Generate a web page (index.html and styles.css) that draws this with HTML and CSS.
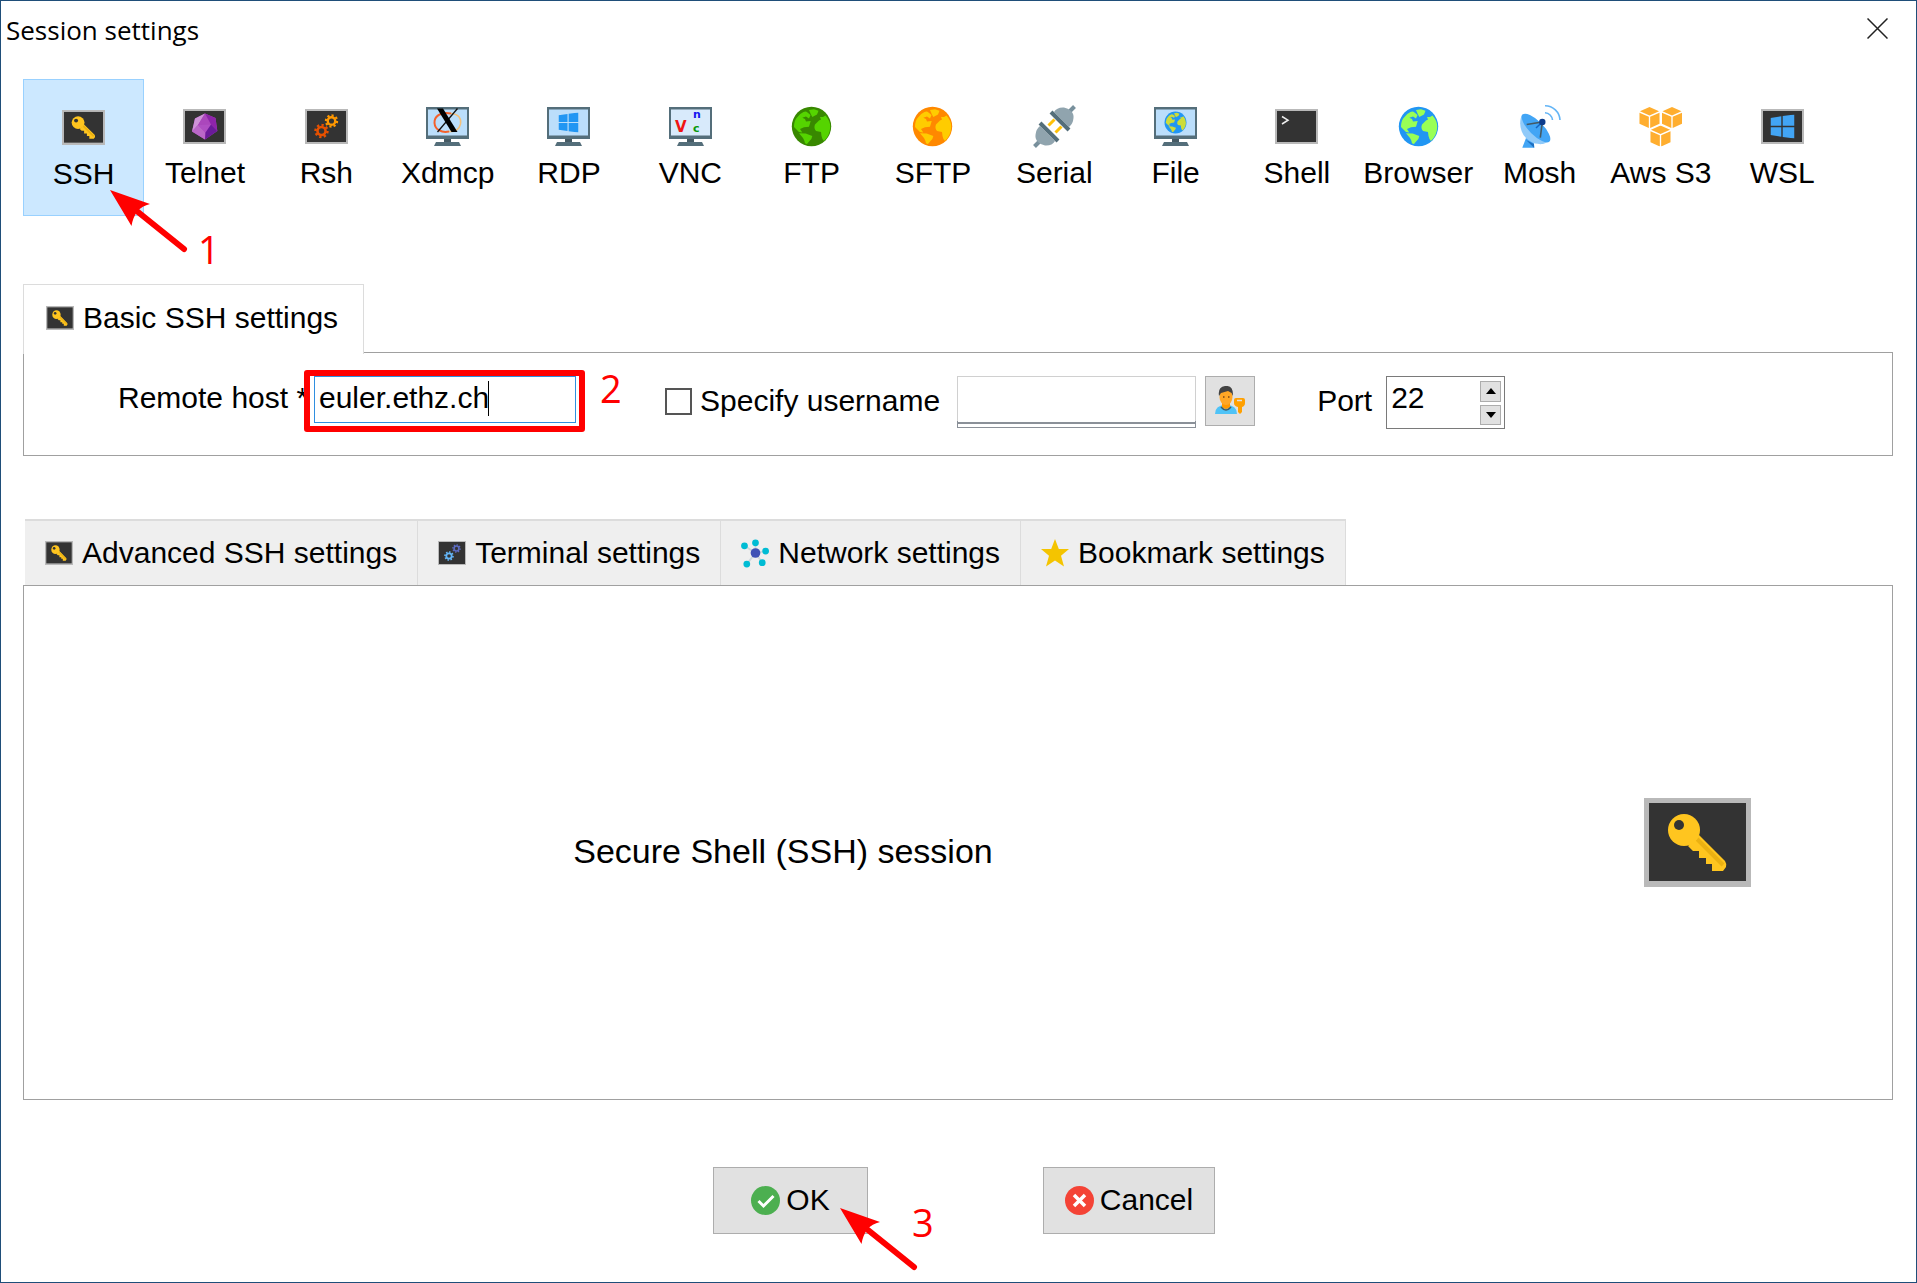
FILE: index.html
```html
<!DOCTYPE html>
<html lang="en">
<head>
  <meta charset="UTF-8">
  <meta name="viewport" content="width=device-width, initial-scale=1.0">
  <title>Session settings</title>
  <link rel="stylesheet" href="styles.css">
</head>
<body>
  <!-- Shared icon shapes -->
  <svg class="sprite" aria-hidden="true">
    <symbol id="key" viewBox="0 0 107 89" preserveAspectRatio="none">
      <rect width="107" height="89" fill="#b9b9b9"/>
      <rect x="5" y="5" width="97" height="78" fill="#333"/>
      <path d="M55 37L81 63Q83 66 82 69L79 73H68V66H62V60H55V53H49L44 48Z" fill="#ffc51f"/>
      <path d="M53 41L79 67" stroke="#ebb112" stroke-width="4"/>
      <circle cx="40" cy="32" r="16" fill="#ffc51f"/>
      <circle cx="35" cy="27" r="5" fill="#333"/>
    </symbol>
    <symbol id="screen" viewBox="0 0 43 43">
      <rect y="4" width="43" height="35" fill="#b9b9b9"/>
      <rect x="2" y="6" width="39" height="31" fill="#333"/>
    </symbol>
    <symbol id="monitor" viewBox="0 0 43 43">
      <path d="M0 2H43V34H0Z" fill="#546e7a"/>
      <path d="M2 4.500H41V30.500H2Z" fill="var(--glass, #bbdefb)"/>
      <path d="M18 34H25V38H18Z" fill="#455a64"/>
      <path d="M10 37H33L35 41H8Z" fill="#546e7a"/>
    </symbol>
    <symbol id="gear" viewBox="0 0 16 16">
      <circle cx="8" cy="8" r="4.300" fill="none" stroke="currentColor" stroke-width="2.800"/>
      <circle cx="8" cy="8" r="6.400" fill="none" stroke="currentColor" stroke-width="2.600" pathLength="16" stroke-dasharray="1"/>
    </symbol>
    <symbol id="win" viewBox="0 0 24 24">
      <path d="M0 3.400L10.800 1.800V11.300H0ZM12.200 1.600L24 0V11.300H12.200ZM0 12.700H10.800V22.200L0 20.600ZM12.200 12.700H24V24L12.200 22.400Z" fill="currentColor"/>
    </symbol>
    <symbol id="globe" viewBox="0 0 43 43">
      <circle cx="21.500" cy="21.500" r="19.700" fill="var(--sea)"/>
      <g fill="var(--land)">
        <path d="M4 22Q4 15 7.500 12Q10 8.500 13.500 7Q16 6 17.500 7.500L20.500 10L19 13.500L16 11.500L12.300 12.700L15 14L16 16.500L20.700 16L19 21.700L14 22.300L10 24L12.300 27.500L9 27Z"/>
        <path d="M9 28.300L15.700 28.500L22.300 31Q22 34 19.500 36L17 39Q14.500 39 14.500 36L13 33Z"/>
        <path d="M35.500 10.500Q40.500 16 40.200 22Q40 30 34 36Q32 34 31.500 31L31 27L26 26Q23.500 23 25 19.500L29 15.500L31 14.500L30 12L33 12Z"/>
        <path d="M19 5L24 4.200L28.500 5.700L27 9.500L22.300 12L20.500 8.500Z"/>
      </g>
    </symbol>
    <symbol id="plug" viewBox="0 0 43 43">
      <path d="M8 35L1.500 41.500" stroke="#78909c" stroke-width="4"/>
      <path d="M7 21L22 36Q19 41 12 40.500Q8 40 5 37Q2 34 2.500 30Q3 24 7 21Z" fill="#90a4ae"/>
      <path d="M7 18L25 36" stroke="#546e7a" stroke-width="4"/>
    </symbol>
    <symbol id="cube" viewBox="0 0 22 22">
      <path d="M11 0L21 4.500L11 9L1 4.500ZM.5 6L10.300 10.300V22L.5 17.500ZM21.500 6L11.700 10.300V22L21.500 17.500Z" fill="#ffae2f"/>
    </symbol>
    <symbol id="arrow" viewBox="0 0 80 66">
      <path d="M28 22L74 59" stroke="#f00" stroke-width="6" stroke-linecap="round"/>
      <path d="M0 0L40 14Q32 16 27.500 21Q23 27 21.500 36Z" fill="#f00"/>
    </symbol>
  </svg>

  <div class="window">
    <header class="titlebar">
      <h1 class="title">Session settings</h1>
      <button type="button" class="close" aria-label="Close">
        <svg width="21" height="21" viewBox="0 0 21 21"><path d="M.5 .5L20.500 20.500M20.500 .5L.5 20.500" stroke="#222" stroke-width="1.500"/></svg>
      </button>
    </header>

    <nav class="sessions">
      <button type="button" class="session selected">
        <svg class="icon" viewBox="0 0 43 43"><use href="#key" y="4" width="43" height="35"/></svg>
        <span>SSH</span>
        <span class="callout callout-ssh"><svg width="80" height="66"><use href="#arrow"/></svg><b class="step">1</b></span>
      </button>
      <button type="button" class="session">
        <svg class="icon" viewBox="0 0 43 43">
          <use href="#screen"/>
          <path d="M22 8.500L32.500 13L34.300 26L22 34.500L9 26.500L12 13.500Z" fill="#ab47bc"/>
          <path d="M22 8.500L12 13.500L9 26.500L15 20Z" fill="#ce93d8"/>
          <path d="M22 8.500L15 20L28 19.500Z" fill="#ab47bc"/>
          <path d="M22 8.500L32.500 13L34.300 26L28 19.500Z" fill="#8e24aa"/>
          <path d="M9 26.500L15 20L22.500 27.500L22 34.500Z" fill="#ba68c8"/>
          <path d="M15 20L28 19.500L22.500 28Z" fill="#b04fc3"/>
          <path d="M28 19.500L34.300 26L22 34.500L22.500 27.500Z" fill="#6a1b9a"/>
        </svg>
        <span>Telnet</span>
      </button>
      <button type="button" class="session">
        <svg class="icon" viewBox="0 0 43 43">
          <use href="#screen"/>
          <use href="#gear" x="19.500" y="9" width="14" height="14" color="#ff9800"/>
          <use href="#gear" x="9" y="18.500" width="15" height="15" color="#e65100"/>
        </svg>
        <span>Rsh</span>
      </button>
      <button type="button" class="session">
        <svg class="icon" viewBox="0 0 43 43">
          <use href="#monitor"/>
          <path d="M25 8.500C14 6 8 12 8.500 18C9 25 16 28 23 26.500" fill="none" stroke="#f4612c" stroke-width="2"/>
          <path d="M25 8.500C33 9 35.500 14 34.500 19C33 25 28 27 23 26.500" fill="none" stroke="#f5c07a" stroke-width="1.500"/>
          <path d="M31.500 3.500L11.500 27" stroke="#111" stroke-width="1.300"/>
          <path d="M11 3.500H17L31.500 27H25.500Z" fill="#000"/>
        </svg>
        <span>Xdmcp</span>
      </button>
      <button type="button" class="session">
        <svg class="icon" viewBox="0 0 43 43"><use href="#monitor"/><use href="#win" x="11.500" y="7.500" width="20" height="20" color="#2196f3"/></svg>
        <span>RDP</span>
      </button>
      <button type="button" class="session">
        <svg class="icon vnc" viewBox="0 0 43 43">
          <use href="#monitor"/>
          <text class="vnc-v" x="6" y="27" fill="#f01414">V</text>
          <text x="24" y="13" fill="#1414f0">n</text>
          <text x="24" y="27" fill="#0a9a0a">c</text>
        </svg>
        <span>VNC</span>
      </button>
      <button type="button" class="session">
        <svg class="icon globe-green" viewBox="0 0 43 43"><use href="#globe"/></svg>
        <span>FTP</span>
      </button>
      <button type="button" class="session">
        <svg class="icon globe-orange" viewBox="0 0 43 43"><use href="#globe"/></svg>
        <span>SFTP</span>
      </button>
      <button type="button" class="session">
        <svg class="icon" viewBox="0 0 43 43">
          <path d="M15.500 20.500L21.500 14.500M22.500 27.500L28.500 21.500" stroke="#ffc107" stroke-width="3"/>
          <use href="#plug"/>
          <use href="#plug" transform="rotate(180 21.500 21.500)"/>
        </svg>
        <span>Serial</span>
      </button>
      <button type="button" class="session">
        <svg class="icon globe-file" viewBox="0 0 43 43"><use href="#monitor"/><use href="#globe" x="9.500" y="5.500" width="24" height="24"/></svg>
        <span>File</span>
      </button>
      <button type="button" class="session">
        <svg class="icon" viewBox="0 0 43 43"><use href="#screen"/><path d="M7 11.500L13 15.200L7 19" fill="none" stroke="#eee" stroke-width="1.500"/></svg>
        <span>Shell</span>
      </button>
      <button type="button" class="session">
        <svg class="icon globe-blue" viewBox="0 0 43 43"><use href="#globe"/></svg>
        <span>Browser</span>
      </button>
      <button type="button" class="session">
        <svg class="icon" viewBox="0 0 43 43">
          <path d="M8 33L4.300 42.700H16.500L15.500 36Z" fill="#42a5f5"/>
          <path d="M8 35L16 39V42.700Z" fill="#1e6fc0"/>
          <path d="M4.300 9.300C-2 21 6 41 25 39L31.500 36.500Z" fill="#90caf9"/>
          <ellipse cx="18" cy="23" rx="19" ry="7" transform="rotate(45 18 23)" fill="#42a5f5"/>
          <path d="M8.700 19.500L24.300 17L22.300 32.700" fill="none" stroke="#455a64" stroke-width="1.600"/>
          <path d="M24.300 17L18 23" stroke="#1565c0" stroke-width="1.500"/>
          <circle cx="24.300" cy="17" r="3.200" fill="#0d3c8c"/>
          <path d="M27 7.700A8 8 0 0 1 34.500 15M27 .8A15 15 0 0 1 42 15" fill="none" stroke="#64b5f6" stroke-width="1.600"/>
        </svg>
        <span>Mosh</span>
      </button>
      <button type="button" class="session">
        <svg class="icon" viewBox="0 0 43 43">
          <use href="#cube" x="0" y="2" width="21" height="21"/>
          <use href="#cube" x="22.500" y="2" width="21" height="21"/>
          <use href="#cube" x="11" y="20.500" width="21" height="21"/>
        </svg>
        <span>Aws S3</span>
      </button>
      <button type="button" class="session">
        <svg class="icon" viewBox="0 0 43 43"><use href="#screen"/><use href="#win" x="9.500" y="9.500" width="24" height="24" color="#42a5f5"/></svg>
        <span>WSL</span>
      </button>
    </nav>

    <section class="basic">
      <div class="tabs">
        <button type="button" class="tab active">
          <svg width="28" height="24"><use href="#key"/></svg>
          Basic SSH settings
        </button>
      </div>
      <form class="panel form-row">
        <label class="host-label" for="host">Remote host *</label>
        <div class="host-field">
          <input type="text" id="host" class="host-input" value="euler.ethz.ch">
          <span class="caret"></span>
          <span class="highlight"></span>
          <b class="step step-host">2</b>
        </div>
        <label class="check" for="specify">
          <input type="checkbox" id="specify">
          Specify username
        </label>
        <div class="user-field">
          <input type="text" class="user-input" aria-label="Username">
        </div>
        <button type="button" class="user-btn" aria-label="Manage users">
          <svg width="30" height="30" viewBox="0 0 30 30">
            <path d="M0 28Q0 19 11 19Q22 19 22 28Z" fill="#4fc3f7"/>
            <path d="M7 17H15V21Q11 25 7 21Z" fill="#ff9800"/>
            <path d="M6 21Q11 27 16 21" fill="none" stroke="#455a64" stroke-width="1.500"/>
            <ellipse cx="11" cy="11" rx="6.500" ry="8" fill="#ffa726"/>
            <path d="M4 10Q2.500 1 10 0Q18.500-1 18 10L16.500 7L13 5L6 7Z" fill="#424242"/>
            <path d="M8 11H9.500M13 11H14.500" stroke="#784719" stroke-width="1.500"/>
            <path d="M19 14Q19 12 21 12H28Q30 12 30 14V17Q30 20 27 21V26L25 28L23 26V21Q19 20 19 17Z" fill="#ffa000"/>
            <path d="M22 14.500H27" stroke="#e0e0e0" stroke-width="1.500"/>
          </svg>
        </button>
        <label class="port-label" for="port">Port</label>
        <div class="spinner">
          <input type="text" id="port" class="port-input" value="22">
          <div class="spin-buttons">
            <button type="button" aria-label="Increase port"><svg width="10" height="6"><path d="M5 0L10 6H0Z"/></svg></button>
            <button type="button" aria-label="Decrease port"><svg width="10" height="6"><path d="M0 0H10L5 6Z"/></svg></button>
          </div>
        </div>
      </form>
    </section>

    <section class="details">
      <div class="tabs details-tabs">
        <button type="button" class="tab">
          <svg width="28" height="24"><use href="#key"/></svg>
          Advanced SSH settings
        </button>
        <button type="button" class="tab">
          <svg width="28" height="24" viewBox="0 0 28 24">
            <rect width="28" height="24" fill="#b9b9b9"/>
            <rect x="1" y="1" width="26" height="22" fill="#333"/>
            <use href="#gear" x="14" y="3" width="9" height="9" color="#5c6bc0"/>
            <use href="#gear" x="6" y="10" width="10" height="10" color="#64b5f6"/>
          </svg>
          Terminal settings
        </button>
        <button type="button" class="tab">
          <svg width="28" height="30" viewBox="0 0 29 30">
            <path d="M15 15V4.500M15 15L3.600 7.500M15 15L25.500 13M15 15L22 25M15 15L6 26.500" stroke="#cfd8dc" stroke-width="2"/>
            <g fill="#00bcd4">
              <circle cx="15" cy="4.500" r="3.500"/><circle cx="3.600" cy="7.500" r="3.500"/><circle cx="25.500" cy="13" r="3.500"/><circle cx="22" cy="25" r="3.500"/><circle cx="6" cy="26.500" r="3.500"/>
            </g>
            <circle cx="15" cy="15" r="5" fill="#3f51b5"/>
          </svg>
          Network settings
        </button>
        <button type="button" class="tab">
          <svg width="28" height="28" viewBox="0 0 28 28"><path d="M14 0L17.800 10H28L20 16.800L23 27.500L14 21.500L5 27.500L8 16.800L0 10H10.200Z" fill="#f4c400"/></svg>
          Bookmark settings
        </button>
      </div>
      <div class="panel summary">
        <p class="summary-text">Secure Shell (SSH) session</p>
        <div class="summary-icon"><svg width="107" height="89"><use href="#key"/></svg></div>
      </div>
    </section>

    <footer class="actions">
      <button type="button" class="btn btn-ok">
        <svg width="29" height="29" viewBox="0 0 29 29"><circle cx="14.500" cy="14.500" r="14.500" fill="#4caf50"/><path d="M7.500 15L12.500 20L22.500 10" fill="none" stroke="#fff" stroke-width="3"/></svg>
        OK
        <span class="callout callout-ok"><svg width="80" height="66"><use href="#arrow"/></svg><b class="step">3</b></span>
      </button>
      <button type="button" class="btn btn-cancel">
        <svg width="29" height="29" viewBox="0 0 29 29"><circle cx="14.500" cy="14.500" r="14.500" fill="#f44336"/><path d="M9 9L20 20M20 9L9 20" stroke="#fff" stroke-width="3.500"/></svg>
        Cancel
      </button>
    </footer>
  </div>
</body>
</html>
```

FILE: styles.css
```css
* {
  box-sizing: border-box;
  margin: 0;
  padding: 0;
}

:root {
  --red: #ff0000;
  --frame: #1f4e79;
  --line: #a0a0a0;
  --line-light: #dcdcdc;
  --tab: #efefef;
  --button: #e1e1e1;
  --font-ui: "Liberation Sans", Arial, sans-serif;
  --font-title: "Open Sans", "Segoe UI", sans-serif;
}

body {
  font-family: var(--font-ui);
  font-size: 30px;
  line-height: 34px;
  color: #000;
  background-color: #fff;
}

button,
input {
  font: inherit;
  color: inherit;
}

button {
  border: none;
  background: none;
}

svg {
  display: block;
  flex-shrink: 0;
}

.sprite {
  position: absolute;
  width: 0;
  height: 0;
}

.window {
  display: flex;
  flex-direction: column;
  min-height: 100vh;
  padding: 0 23px 48px 22px;
  border: 1px solid var(--frame);
}

/* Title bar */
.titlebar {
  display: flex;
  justify-content: space-between;
  align-items: flex-start;
  height: 78px;
  margin-left: -17px;
}

.title {
  padding-top: 12px;
  font-family: var(--font-title);
  font-size: 26px;
  font-weight: 400;
}

.close {
  margin: 9px -3px 0 0;
  padding: 8px;
}

/* Session types */
.sessions {
  display: flex;
  margin-right: 50px;
}

.session {
  position: relative;
  display: flex;
  flex: 1 1 10px;
  flex-direction: column;
  align-items: center;
  gap: 8px;
  min-width: 0;
  height: 137px;
  padding-top: 26px;
  white-space: nowrap;
}

.session.selected {
  background-color: #cce8ff;
  border: 1px solid #99d1ff;
}

.icon {
  width: 43px;
  height: 43px;
}

.vnc {
  --glass: #d8eafb;
  font: bold 11px "DejaVu Sans", sans-serif;
}

.vnc-v {
  font-size: 15px;
}

.globe-green {
  --sea: #388800;
  --land: #55d400;
}

.globe-orange {
  --sea: #ff8800;
  --land: #ffcc00;
}

.globe-file {
  --sea: #2196f3;
  --land: #cddc39;
}

.globe-blue {
  --sea: #2196f3;
  --land: #99ff55;
}

/* Numbered callouts */
.callout {
  position: absolute;
  z-index: 2;
  display: flex;
  gap: 8px;
}

.callout-ssh {
  top: 110px;
  left: 86px;
}

.callout-ok {
  top: 40px;
  left: 126px;
}

.step {
  font-family: var(--font-title);
  font-size: 38px;
  font-weight: 400;
  line-height: 44px;
  color: var(--red);
}

.callout-ssh .step {
  padding-top: 37px;
}

.callout-ok .step {
  margin: -8px 0 0 -16px;
}

/* Tabs and panels */
.basic {
  margin-top: 68px;
}

.tabs {
  display: flex;
}

.tab {
  display: flex;
  align-items: center;
  gap: 9px;
  height: 66px;
  padding: 0 20px 1px;
  background-color: var(--tab);
  border-top: 2px solid var(--line-light);
  border-right: 1px solid var(--line-light);
  white-space: nowrap;
}

.tab.active {
  position: relative;
  height: 70px;
  margin-bottom: -2px;
  padding: 0 25px 3px 22px;
  background-color: #fff;
  border: 1px solid var(--line-light);
  border-bottom: none;
}

.panel {
  border: 1px solid var(--line);
}

.form-row {
  display: flex;
  align-items: flex-start;
  height: 104px;
  padding: 23px 0 0 94px;
  white-space: nowrap;
}

.host-label {
  width: 196px;
  line-height: 44px;
}

.host-field {
  position: relative;
  width: 262px;
}

.host-input {
  width: 100%;
  height: 47px;
  padding: 0 4px 3px;
  border: 1px solid #2f8fe0;
  outline: none;
}

.caret {
  position: absolute;
  top: 5px;
  left: 174px;
  width: 1px;
  height: 35px;
  background-color: #000;
}

.highlight {
  position: absolute;
  inset: -6px -9px -9px -10px;
  border: 6px solid var(--red);
  border-radius: 3px;
}

.step-host {
  position: absolute;
  top: -10px;
  left: 286px;
}

.check {
  display: flex;
  align-items: center;
  gap: 8px;
  margin-left: 89px;
  line-height: 50px;
}

.check input {
  width: 27px;
  height: 27px;
  appearance: none;
  background-color: #fff;
  border: 2px solid #555;
}

.user-field {
  width: 239px;
  height: 52px;
  margin-left: 17px;
  border: 1px solid;
  border-image: linear-gradient(#d0d0d0 86%, #8a9098 86%) 1;
}

.user-input {
  display: block;
  width: 100%;
  height: 47px;
  padding: 0 4px;
  border: none;
  border-bottom: 2px solid #8a9098;
  outline: none;
}

.user-btn {
  display: grid;
  place-items: center;
  width: 50px;
  height: 50px;
  margin-left: 9px;
  background-color: var(--button);
  border: 1px solid #adadad;
}

.port-label {
  margin-left: 62px;
  line-height: 50px;
}

.spinner {
  display: flex;
  width: 119px;
  height: 53px;
  margin-left: 14px;
  padding: 4px 3px 3px 4px;
  border: 1px solid #7a7a7a;
}

.port-input {
  flex: 1;
  min-width: 0;
  height: 34px;
  border: none;
  outline: none;
}

.spin-buttons {
  display: flex;
  flex-direction: column;
  gap: 3px;
  width: 21px;
}

.spin-buttons button {
  display: grid;
  flex: 1;
  place-items: center;
  background-color: var(--button);
  border: 1px solid #adadad;
}

/* Session details */
.details {
  display: flex;
  flex: 1;
  flex-direction: column;
  margin-top: 63px;
}

.details-tabs {
  margin-left: 2px;
}

.summary {
  display: flex;
  flex: 1;
  align-items: center;
  padding-right: 40px;
}

.summary-text {
  flex: 1;
  padding-top: 16px;
  font-size: 34px;
  text-align: center;
}

.summary-icon {
  display: flex;
  justify-content: center;
  width: 310px;
}

/* Dialog buttons */
.actions {
  display: flex;
  justify-content: center;
  gap: 175px;
  margin-top: 67px;
  padding-left: 12px;
}

.btn {
  position: relative;
  display: flex;
  align-items: center;
  justify-content: center;
  gap: 6px;
  height: 67px;
  padding-bottom: 1px;
  background-color: var(--button);
  border: 1px solid #adadad;
}

.btn-ok {
  width: 155px;
}

.btn-cancel {
  width: 172px;
}
```
